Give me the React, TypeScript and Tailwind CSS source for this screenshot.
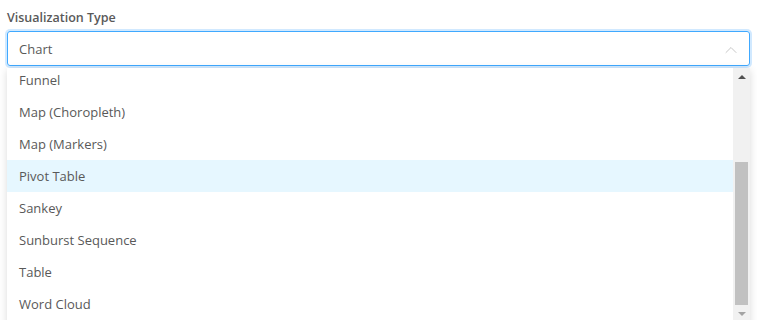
import { ChevronUp } from 'lucide-react'

const options = [
  'Funnel',
  'Map (Choropleth)',
  'Map (Markers)',
  'Pivot Table',
  'Sankey',
  'Sunburst Sequence',
  'Table',
  'Word Cloud',
]

export default function App() {
  return (
    <div className="h-[320px] w-[757px] overflow-hidden bg-white font-['Segoe_UI','Open_Sans',sans-serif] text-[13px]">
      <div className="px-[7px] pt-[8px]">
        {/* Label */}
        <div className="h-[20px] text-[12.5px] font-semibold leading-[20px] text-[#595959]">
          Visualization Type
        </div>

        {/* Select box */}
        <div className="mt-[3px] flex h-[35px] items-center rounded-[3px] border border-[#40a9ff] pl-[11px] pr-[8px] pt-[2px] shadow-[0_0_0_2px_rgba(24,144,255,0.2)]">
          <span className="flex-1 text-[#595959]">Chart</span>
          <ChevronUp className="h-[20px] w-[20px] text-[#c8c8c8]" strokeWidth={1.2} />
        </div>

        {/* Dropdown */}
        <div className="mt-[2px] flex h-[260px] shadow-[0_2px_8px_rgba(0,0,0,0.15)]">
          <div className="flex-1 overflow-hidden">
            <div className="-mt-[4px]">
              {options.map((o) => (
                <div
                  key={o}
                  className={`flex h-[32px] items-center pl-[12px] pt-[2px] text-[#595959] ${o === 'Pivot Table' ? 'bg-[#e6f7ff]' : ''}`}
                >
                  {o}
                </div>
              ))}
            </div>
          </div>

          {/* Scrollbar */}
          <div className="flex w-[17px] flex-col items-center bg-[#f1f1f1]">
            <div className="flex h-[17px] w-full items-center justify-center">
              <div className="h-0 w-0 border-x-[4px] border-b-[4px] border-x-transparent border-b-[#505050]" />
            </div>
            <div className="mt-[77px] h-[143px] w-[13px] bg-[#c1c1c1]" />
            <div className="flex h-[17px] w-full items-center justify-center">
              <div className="h-0 w-0 border-x-[4px] border-t-[4px] border-x-transparent border-t-[#a3a3a3]" />
            </div>
          </div>
        </div>
      </div>
    </div>
  )
}
